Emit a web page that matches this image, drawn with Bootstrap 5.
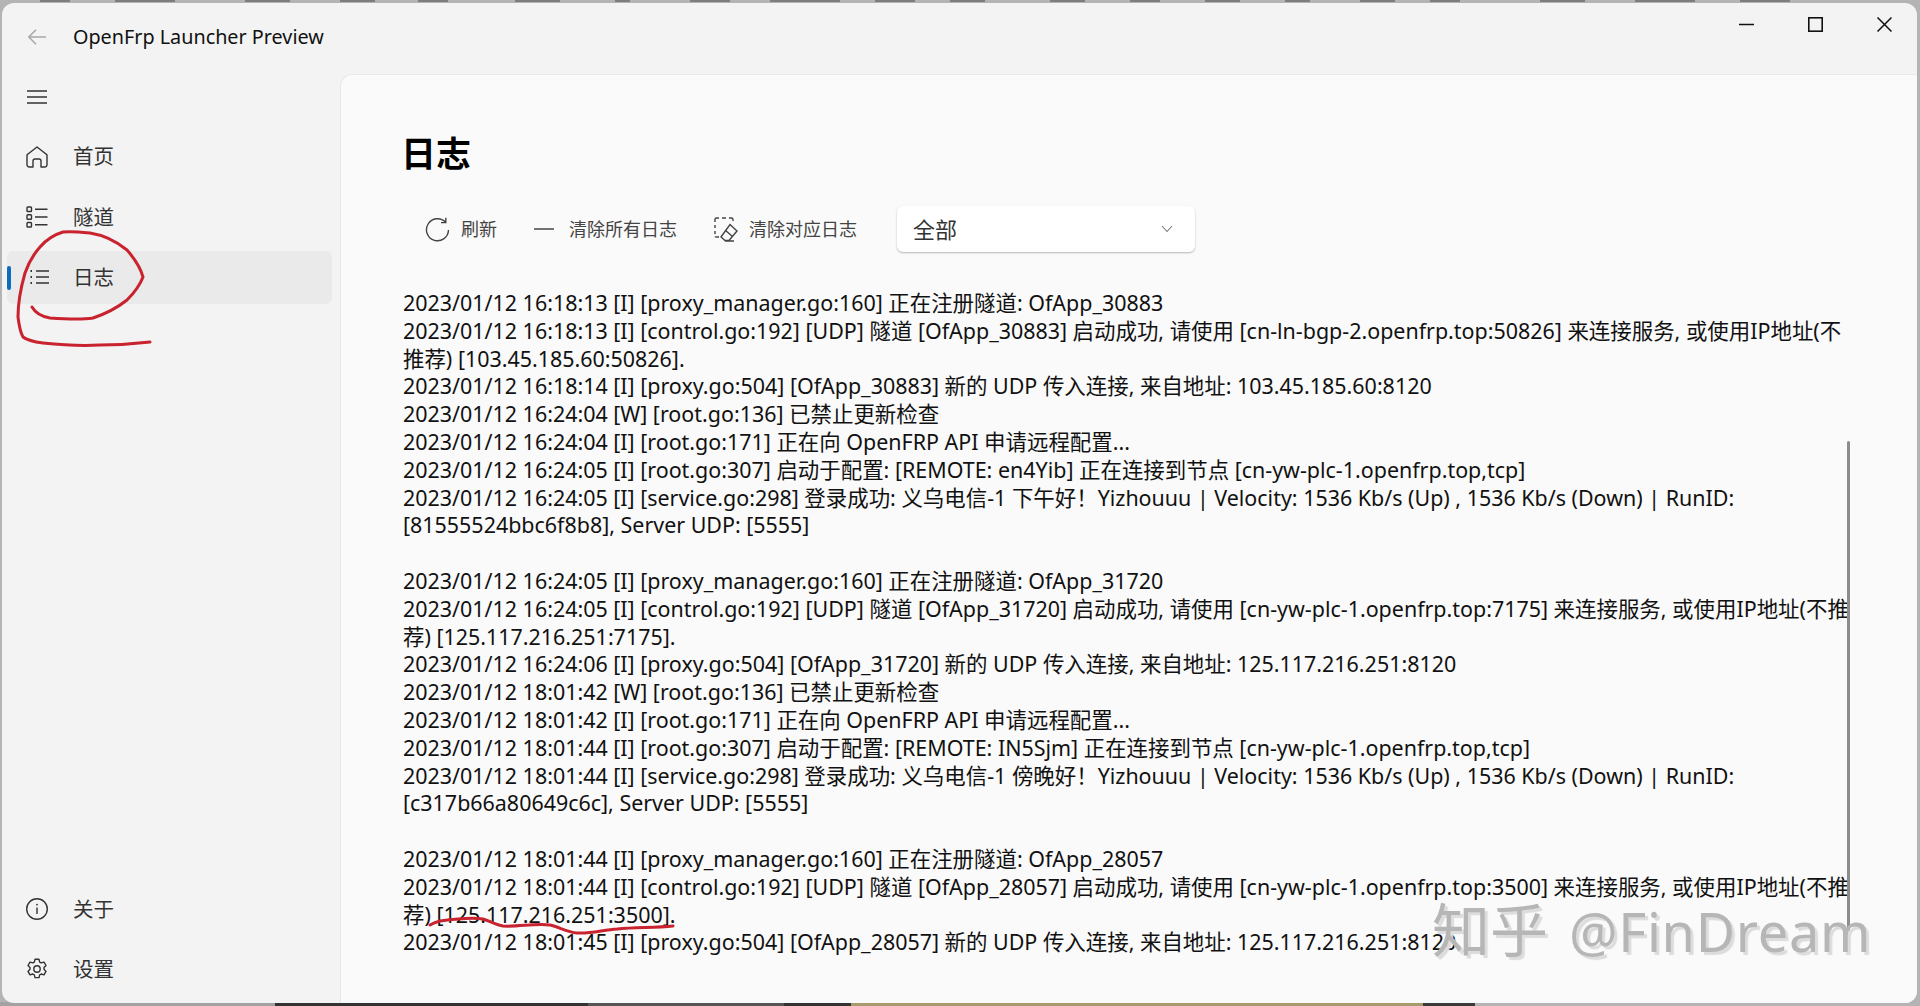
<!DOCTYPE html>
<html lang="zh-CN">
<head>
<meta charset="utf-8">
<title>OpenFrp Launcher Preview</title>
<link href="https://cdn.jsdelivr.net/npm/bootstrap@5.3.0/dist/css/bootstrap.min.css" rel="stylesheet">
<style>
html,body{height:100%;overflow:hidden}
body{background:#b4b4b4;font-family:"Noto Sans","Noto Sans CJK SC",sans-serif;color:#111;position:relative}
.desk-top{position:absolute;left:0;right:0;top:0;height:2px;background:linear-gradient(90deg,#b4b4b4 40px,#7d7d7d 40px 70px,#b4b4b4 70px 115px,#7d7d7d 115px 175px,#b4b4b4 175px 245px,#7d7d7d 245px 290px,#b4b4b4 290px 340px,#7d7d7d 340px 375px,#b4b4b4 375px 418px,#7d7d7d 418px 448px,#b4b4b4 448px 515px,#7d7d7d 515px 560px,#b4b4b4 560px 615px,#7d7d7d 615px 630px,#b4b4b4 630px 690px,#7d7d7d 690px 730px,#b4b4b4 730px 770px,#7d7d7d 770px 840px,#b4b4b4 840px 875px,#7d7d7d 875px 915px,#b4b4b4 915px 950px,#7d7d7d 950px 985px,#b4b4b4 985px 1050px,#7d7d7d 1050px 1085px,#b4b4b4 1085px 1130px,#7d7d7d 1130px 1160px,#b4b4b4 1160px 1205px,#7d7d7d 1205px 1240px,#b4b4b4 1240px 1285px,#7d7d7d 1285px 1310px,#b4b4b4 1310px 1360px,#7d7d7d 1360px 1395px,#b4b4b4 1395px 1430px,#7d7d7d 1430px 1460px,#b4b4b4 1460px 1540px,#7d7d7d 1540px 1585px,#b4b4b4 1585px 1635px,#7d7d7d 1635px 1695px,#b4b4b4 1695px 1740px,#7d7d7d 1740px 1790px,#b4b4b4 1790px)}
.desk-strip{position:absolute;left:0;right:0;bottom:0;height:4px}
.desk-a{width:275px;background:#a2a2a2}
.desk-b{width:313px;background:#333}
.desk-c{width:196px;background:#555}
.desk-f{width:67px;background:#333}
.desk-d{width:572px;background:#a79a6c}
.desk-e{width:52px;background:#3a3a3a}
.win{position:absolute;inset:3px 3px 3px 2px;background:#f3f3f3;border-radius:12px;overflow:hidden}
.titlebar{height:67px;padding-left:26px}
.title-text{margin-left:27px;font-size:19.8px;color:#111}
.winctl{margin-right:-2px}
.winctl svg{display:block}
.ctlbtn{width:69px;height:42px}
.body-row{min-height:0}
.side{width:338px;padding:0 8px 0 5px}
.navi{height:53px;margin-bottom:7.2px;padding-left:19px;color:#333;font-size:20.5px;border-radius:6px;position:relative;text-decoration:none}
.navi svg{flex:none}
.navi-lab{margin-left:25px}
.navi-lab-on{margin-left:23px}
.navi-on{background:#eaeaea}
.navi-on::before{content:"";position:absolute;left:0;top:15px;width:4px;height:24px;border-radius:2px;background:#0f6cbd}
.contentp{background:#fafafa;margin-top:4px;border-top:1px solid #e8e8e8;border-left:1px solid #e8e8e8;border-top-left-radius:12px;padding:0 0 0 62px;position:relative;min-width:0}
.page-h{font-size:35px;font-weight:700;line-height:48px;margin:55px 0 0 -2px;color:#000}
.tools{margin-top:28px;height:46px;padding-left:22px;font-size:18px;color:#444}
.toolb{color:#444;font-size:18px;gap:11px;border:0;padding:0;line-height:1;background:none}
.toolb-gap{margin-left:37px}
.dash-lab{margin-left:4px}
.pick{width:298px;height:46px;margin-left:40px;background:#fff;border-radius:6px;box-shadow:0 1px 2px rgba(0,0,0,.28);padding:0 22px 0 16px;font-size:22px;color:#333}
.logs{margin-top:37px;font-size:21.45px;line-height:27.8px;color:#111;white-space:nowrap}
.logs div{min-height:27.8px}
.thumb{position:absolute;left:1505.5px;top:366px;width:3px;height:492px;background:#8c8c8c;border-radius:2px}
.wmark{position:absolute;left:1091px;top:820px;font-size:54px;line-height:70px;color:#b6b6b6;white-space:nowrap;text-shadow:3px 3px 1px #dcdcdc;letter-spacing:.7px}
.wmark-cjk{font-size:58px;letter-spacing:0;margin-right:21px}
.ink{position:absolute;left:0;top:0;pointer-events:none;overflow:visible}
</style>
</head>
<body>
<div class="desk-top"></div>
<div class="desk-strip d-flex"><span class="desk-a"></span><span class="desk-b"></span><span class="desk-c"></span><span class="desk-f"></span><span class="desk-d"></span><span class="desk-e"></span></div>
<div class="win d-flex flex-column">
  <header class="titlebar d-flex align-items-center flex-shrink-0">
    <svg width="18" height="16" viewBox="0 0 18 16" fill="none" stroke="#a8a8a8" stroke-width="1.5"><path d="M.8 8H18M8 .7.8 8l7.200 7.300"/></svg>
    <span class="title-text">OpenFrp Launcher Preview</span>
    <div class="winctl d-flex ms-auto align-self-start">
      <div class="ctlbtn d-flex align-items-center justify-content-center"><svg width="15" height="15" viewBox="0 0 15 15" stroke="#111" stroke-width="1.5"><path d="M0 7.500h15"/></svg></div>
      <div class="ctlbtn d-flex align-items-center justify-content-center"><svg width="15" height="15" viewBox="0 0 15 15" fill="none" stroke="#111" stroke-width="1.600"><rect x=".8" y=".8" width="13.400" height="13.400"/></svg></div>
      <div class="ctlbtn d-flex align-items-center justify-content-center"><svg width="15" height="15" viewBox="0 0 15 15" stroke="#111" stroke-width="1.500"><path d="M.5.5l14 14M14.500.5l-14 14"/></svg></div>
    </div>
  </header>
  <div class="body-row d-flex flex-grow-1">
    <aside class="side d-flex flex-column flex-shrink-0">
      <nav class="nav flex-column flex-grow-1">
        <a class="navi d-flex align-items-center" href="#" aria-label="菜单"><svg width="22" height="22" viewBox="0 0 22 22" fill="none" stroke="#333" stroke-width="1.400"><path d="M1 5h20M1 11h20M1 17h20"/></svg></a>
        <a class="navi d-flex align-items-center" href="#"><svg width="22" height="22" viewBox="0 0 22 22" fill="none" stroke="#333" stroke-width="1.400" stroke-linejoin="round"><path d="M11 1 1.700 8.200a1.500 1.500 0 0 0-.7 1.200v9.100A2.300 2.300 0 0 0 3.300 21H7V15a2 2 0 0 1 2-2h4a2 2 0 0 1 2 2v6h3.700a2.300 2.300 0 0 0 2.300-2.500V9.400a1.500 1.500 0 0 0-.7-1.200Z"/></svg><span class="navi-lab">首页</span></a>
        <a class="navi d-flex align-items-center" href="#"><svg width="22" height="22" viewBox="0 0 22 22" fill="none" stroke="#333" stroke-width="1.400"><rect x="1" y="1" width="4.500" height="4.500" rx=".8"/><rect x="1" y="8.800" width="4.500" height="4.500" rx=".8"/><rect x="1" y="16.500" width="4.500" height="4.500" rx=".8"/><path d="M9 3.200h12.500M9 11h12.500M9 18.800h12.500"/></svg><span class="navi-lab">隧道</span></a>
        <a class="navi navi-on d-flex align-items-center" href="#"><svg width="24" height="22" viewBox="0 0 24 22" fill="none" stroke="#333" stroke-width="1.400"><path d="M10 5h13M10 11h13M10 17h13"/><path d="M4.500 5h1.500M4.500 11h1.500M4.500 17h1.500" stroke-width="2"/></svg><span class="navi-lab navi-lab-on">日志</span></a>
        <div class="mt-auto"></div>
        <a class="navi d-flex align-items-center" href="#"><svg width="22" height="22" viewBox="0 0 22 22" fill="none" stroke="#333" stroke-width="1.400"><circle cx="11" cy="11" r="10.300"/><path d="M11 9.500V16"/><circle cx="11" cy="6.600" r=".9" fill="#333" stroke="none"/></svg><span class="navi-lab">关于</span></a>
        <a class="navi d-flex align-items-center" href="#"><svg width="22" height="22" viewBox="0 0 22 22" fill="none" stroke="#333" stroke-width="1.400" stroke-linejoin="round"><circle cx="11" cy="11" r="3.200"/><path d="M9 1.300h4l.7 2.800 1.500.8 2.800-.8 2 3.400-2 2.100v1.700l2 2.100-2 3.400-2.800-.8-1.500.8-.7 2.800H9l-.7-2.800-1.500-.8-2.800.8-2-3.400 2-2.100V9.600l-2-2.100 2-3.400 2.800.8 1.500-.8Z"/></svg><span class="navi-lab">设置</span></a>
      </nav>
    </aside>
    <main class="contentp flex-grow-1">
      <h1 class="page-h">日志</h1>
      <div class="tools d-flex align-items-center">
        <button class="btn toolb d-flex align-items-center" type="button"><svg width="25" height="25" viewBox="0 0 25 25" fill="none" stroke="#444" stroke-width="1.400"><path d="M20.500 5.200A11 11 0 1 0 23.500 13M20.800 .8v4.800h-4.800"/></svg>刷新</button>
        <button class="btn toolb toolb-gap d-flex align-items-center" type="button"><svg width="20" height="2" viewBox="0 0 20 2" stroke="#444" stroke-width="1.600"><path d="M0 1h20"/></svg><span class="dash-lab">清除所有日志</span></button>
        <button class="btn toolb toolb-gap d-flex align-items-center" type="button"><svg width="24" height="25" viewBox="0 0 24 25" fill="none" stroke="#444" stroke-width="1.400"><path d="M1 11V8M1 17v-3M1 5V2.500A1.500 1.500 0 0 1 2.500 1H5M8 1h4M15 1h2.500A1.500 1.500 0 0 1 19 2.500V4M5 20H3A2 2 0 0 1 1 19.500"/><path d="M16 7.500 23 14l-8 9.500H11L7 20Zm-5 5.500 7.500 6.500M11 24h9"/></svg>清除对应日志</button>
        <div class="pick d-flex align-items-center justify-content-between"><span>全部</span><svg width="12" height="8" viewBox="0 0 12 8" fill="none" stroke="#777" stroke-width="1.100"><path d="M1 1l5 5.500L11 1"/></svg></div>
      </div>
      <div class="logs">
        <div>2023/01/12 16:18:13 [I] [proxy_manager.go:160] 正在注册隧道: OfApp_30883</div>
        <div>2023/01/12 16:18:13 [I] [control.go:192] [UDP] 隧道 [OfApp_30883] 启动成功, 请使用 [cn-ln-bgp-2.openfrp.top:50826] 来连接服务, 或使用IP地址(不</div>
        <div>推荐) [103.45.185.60:50826].</div>
        <div>2023/01/12 16:18:14 [I] [proxy.go:504] [OfApp_30883] 新的 UDP 传入连接, 来自地址: 103.45.185.60:8120</div>
        <div>2023/01/12 16:24:04 [W] [root.go:136] 已禁止更新检查</div>
        <div>2023/01/12 16:24:04 [I] [root.go:171] 正在向 OpenFRP API 申请远程配置...</div>
        <div>2023/01/12 16:24:05 [I] [root.go:307] 启动于配置: [REMOTE: en4Yib] 正在连接到节点 [cn-yw-plc-1.openfrp.top,tcp]</div>
        <div>2023/01/12 16:24:05 [I] [service.go:298] 登录成功: 义乌电信-1 下午好！Yizhouuu | Velocity: 1536 Kb/s (Up) , 1536 Kb/s (Down) | RunID:</div>
        <div>[81555524bbc6f8b8], Server UDP: [5555]</div>
        <div></div>
        <div>2023/01/12 16:24:05 [I] [proxy_manager.go:160] 正在注册隧道: OfApp_31720</div>
        <div>2023/01/12 16:24:05 [I] [control.go:192] [UDP] 隧道 [OfApp_31720] 启动成功, 请使用 [cn-yw-plc-1.openfrp.top:7175] 来连接服务, 或使用IP地址(不推</div>
        <div>荐) [125.117.216.251:7175].</div>
        <div>2023/01/12 16:24:06 [I] [proxy.go:504] [OfApp_31720] 新的 UDP 传入连接, 来自地址: 125.117.216.251:8120</div>
        <div>2023/01/12 18:01:42 [W] [root.go:136] 已禁止更新检查</div>
        <div>2023/01/12 18:01:42 [I] [root.go:171] 正在向 OpenFRP API 申请远程配置...</div>
        <div>2023/01/12 18:01:44 [I] [root.go:307] 启动于配置: [REMOTE: IN5Sjm] 正在连接到节点 [cn-yw-plc-1.openfrp.top,tcp]</div>
        <div>2023/01/12 18:01:44 [I] [service.go:298] 登录成功: 义乌电信-1 傍晚好！Yizhouuu | Velocity: 1536 Kb/s (Up) , 1536 Kb/s (Down) | RunID:</div>
        <div>[c317b66a80649c6c], Server UDP: [5555]</div>
        <div></div>
        <div>2023/01/12 18:01:44 [I] [proxy_manager.go:160] 正在注册隧道: OfApp_28057</div>
        <div>2023/01/12 18:01:44 [I] [control.go:192] [UDP] 隧道 [OfApp_28057] 启动成功, 请使用 [cn-yw-plc-1.openfrp.top:3500] 来连接服务, 或使用IP地址(不推</div>
        <div>荐) [125.117.216.251:3500].</div>
        <div>2023/01/12 18:01:45 [I] [proxy.go:504] [OfApp_28057] 新的 UDP 传入连接, 来自地址: 125.117.216.251:8120</div>
      </div>
      <div class="thumb"></div>
      <div class="wmark"><span class="wmark-cjk">知乎</span>@FinDream</div>
    </main>
  </div>
</div>
<svg class="ink" width="1920" height="1006" fill="none" stroke="#c8232f" stroke-width="3" stroke-linecap="round" stroke-linejoin="round">
  <path d="M32 307C36 314 44 317 50 318C65 319 80 320 93 318C105 314 117 308 127 300C134 293 140 285 143 277C140 266 134 258 127 250C116 241 103 235 90 233C80 232 70 231 63 232C53 235 46 240 40 247C33 255 28 264 25 273C21 287 18 302 18 317C19 325 20 332 23 337C28 341 35 342 43 343C62 345 81 346 100 345C116 345 133 344 150 342"/>
  <path d="M430 925C433 923 436 922 440 921C455 919 470 917 483 919C490 921 496 925 503 926C519 927 535 923 550 925C559 927 567 932 577 933C590 934 603 930 617 929C636 927 655 928 673 926"/>
</svg>
</body>
</html>
